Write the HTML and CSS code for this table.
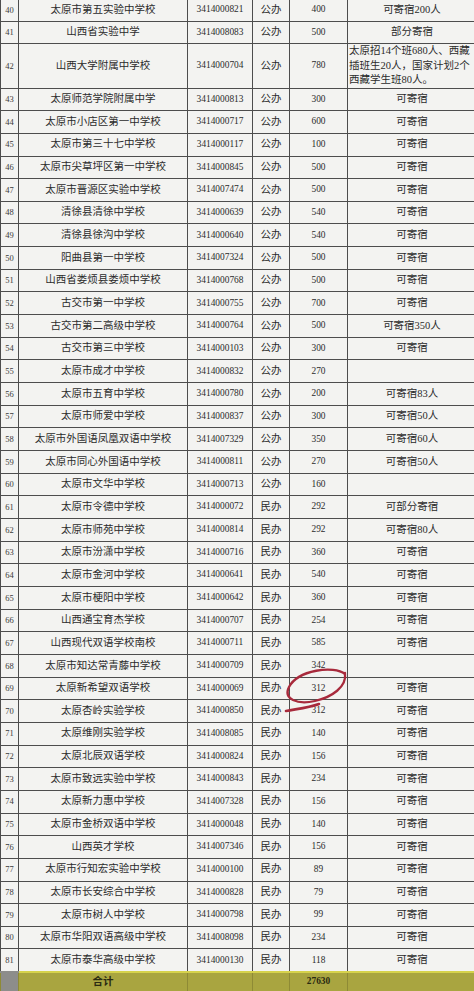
FILE: index.html
```html
<!DOCTYPE html>
<html lang="zh-CN">
<head>
<meta charset="utf-8">
<title>学校名单</title>
<link rel="stylesheet" href="styles.css">
</head>
<body>
<div class="page">
<table class="sheet">
<colgroup>
<col class="c-no"><col class="c-name"><col class="c-code"><col class="c-type"><col class="c-plan"><col class="c-note">
</colgroup>
<tbody>
<tr><td class="no">40</td><td>太原市第五实验中学校</td><td class="num">3414000821</td><td>公办</td><td class="num">400</td><td>可寄宿200人</td></tr>
<tr><td class="no">41</td><td>山西省实验中学</td><td class="num">3414008083</td><td>公办</td><td class="num">500</td><td>部分寄宿</td></tr>
<tr class="tall"><td class="no">42</td><td>山西大学附属中学校</td><td class="num">3414000704</td><td>公办</td><td class="num">780</td><td class="long">太原招14个班680人、西藏<br>插班生20人，国家计划2个<br>西藏学生班80人。</td></tr>
<tr><td class="no">43</td><td>太原师范学院附属中学</td><td class="num">3414000813</td><td>公办</td><td class="num">300</td><td>可寄宿</td></tr>
<tr><td class="no">44</td><td>太原市小店区第一中学校</td><td class="num">3414000717</td><td>公办</td><td class="num">600</td><td>可寄宿</td></tr>
<tr><td class="no">45</td><td>太原市第三十七中学校</td><td class="num">3414000117</td><td>公办</td><td class="num">100</td><td>可寄宿</td></tr>
<tr><td class="no">46</td><td>太原市尖草坪区第一中学校</td><td class="num">3414000845</td><td>公办</td><td class="num">500</td><td>可寄宿</td></tr>
<tr><td class="no">47</td><td>太原市晋源区实验中学校</td><td class="num">3414007474</td><td>公办</td><td class="num">500</td><td>可寄宿</td></tr>
<tr><td class="no">48</td><td>清徐县清徐中学校</td><td class="num">3414000639</td><td>公办</td><td class="num">540</td><td>可寄宿</td></tr>
<tr><td class="no">49</td><td>清徐县徐沟中学校</td><td class="num">3414000640</td><td>公办</td><td class="num">540</td><td>可寄宿</td></tr>
<tr><td class="no">50</td><td>阳曲县第一中学校</td><td class="num">3414007324</td><td>公办</td><td class="num">500</td><td>可寄宿</td></tr>
<tr><td class="no">51</td><td>山西省娄烦县娄烦中学校</td><td class="num">3414000768</td><td>公办</td><td class="num">500</td><td>可寄宿</td></tr>
<tr><td class="no">52</td><td>古交市第一中学校</td><td class="num">3414000755</td><td>公办</td><td class="num">700</td><td>可寄宿</td></tr>
<tr><td class="no">53</td><td>古交市第二高级中学校</td><td class="num">3414000764</td><td>公办</td><td class="num">500</td><td>可寄宿350人</td></tr>
<tr><td class="no">54</td><td>古交市第三中学校</td><td class="num">3414000103</td><td>公办</td><td class="num">300</td><td>可寄宿</td></tr>
<tr><td class="no">55</td><td>太原市成才中学校</td><td class="num">3414000832</td><td>公办</td><td class="num">270</td><td></td></tr>
<tr><td class="no">56</td><td>太原市五育中学校</td><td class="num">3414000780</td><td>公办</td><td class="num">200</td><td>可寄宿83人</td></tr>
<tr><td class="no">57</td><td>太原市师爱中学校</td><td class="num">3414000837</td><td>公办</td><td class="num">300</td><td>可寄宿50人</td></tr>
<tr><td class="no">58</td><td>太原市外国语凤凰双语中学校</td><td class="num">3414007329</td><td>公办</td><td class="num">350</td><td>可寄宿60人</td></tr>
<tr><td class="no">59</td><td>太原市同心外国语中学校</td><td class="num">3414000811</td><td>公办</td><td class="num">270</td><td>可寄宿50人</td></tr>
<tr><td class="no">60</td><td>太原市文华中学校</td><td class="num">3414000713</td><td>公办</td><td class="num">160</td><td></td></tr>
<tr><td class="no">61</td><td>太原市令德中学校</td><td class="num">3414000072</td><td>民办</td><td class="num">292</td><td>可部分寄宿</td></tr>
<tr><td class="no">62</td><td>太原市师苑中学校</td><td class="num">3414000814</td><td>民办</td><td class="num">292</td><td>可寄宿80人</td></tr>
<tr><td class="no">63</td><td>太原市汾潇中学校</td><td class="num">3414000716</td><td>民办</td><td class="num">360</td><td>可寄宿</td></tr>
<tr><td class="no">64</td><td>太原市金河中学校</td><td class="num">3414000641</td><td>民办</td><td class="num">540</td><td>可寄宿</td></tr>
<tr><td class="no">65</td><td>太原市梗阳中学校</td><td class="num">3414000642</td><td>民办</td><td class="num">360</td><td>可寄宿</td></tr>
<tr><td class="no">66</td><td>山西通宝育杰学校</td><td class="num">3414000707</td><td>民办</td><td class="num">254</td><td>可寄宿</td></tr>
<tr><td class="no">67</td><td>山西现代双语学校南校</td><td class="num">3414000711</td><td>民办</td><td class="num">585</td><td>可寄宿</td></tr>
<tr><td class="no">68</td><td>太原市知达常青藤中学校</td><td class="num">3414000709</td><td>民办</td><td class="num">342</td><td></td></tr>
<tr><td class="no">69</td><td>太原新希望双语学校</td><td class="num">3414000069</td><td>民办</td><td class="num">312</td><td>可寄宿</td></tr>
<tr><td class="no">70</td><td>太原杏岭实验学校</td><td class="num">3414000850</td><td>民办</td><td class="num">312</td><td>可寄宿</td></tr>
<tr><td class="no">71</td><td>太原维刚实验学校</td><td class="num">3414008085</td><td>民办</td><td class="num">140</td><td>可寄宿</td></tr>
<tr><td class="no">72</td><td>太原北辰双语学校</td><td class="num">3414000824</td><td>民办</td><td class="num">156</td><td>可寄宿</td></tr>
<tr><td class="no">73</td><td>太原市致远实验中学校</td><td class="num">3414000843</td><td>民办</td><td class="num">234</td><td>可寄宿</td></tr>
<tr><td class="no">74</td><td>太原新力惠中学校</td><td class="num">3414007328</td><td>民办</td><td class="num">156</td><td>可寄宿</td></tr>
<tr><td class="no">75</td><td>太原市金桥双语中学校</td><td class="num">3414000048</td><td>民办</td><td class="num">140</td><td>可寄宿</td></tr>
<tr><td class="no">76</td><td>山西英才学校</td><td class="num">3414007346</td><td>民办</td><td class="num">156</td><td>可寄宿</td></tr>
<tr><td class="no">77</td><td>太原市行知宏实验中学校</td><td class="num">3414000100</td><td>民办</td><td class="num">89</td><td>可寄宿</td></tr>
<tr><td class="no">78</td><td>太原市长安综合中学校</td><td class="num">3414000828</td><td>民办</td><td class="num">79</td><td>可寄宿</td></tr>
<tr><td class="no">79</td><td>太原市树人中学校</td><td class="num">3414000798</td><td>民办</td><td class="num">99</td><td>可寄宿</td></tr>
<tr><td class="no">80</td><td>太原市华阳双语高级中学校</td><td class="num">3414008098</td><td>民办</td><td class="num">234</td><td>可寄宿</td></tr>
<tr><td class="no">81</td><td>太原市泰华高级中学校</td><td class="num">3414000130</td><td>民办</td><td class="num">118</td><td>可寄宿</td></tr>
<tr class="total"><td class="no"></td><td>合计</td><td></td><td></td><td class="num">27630</td><td></td></tr>
</tbody>
</table>
<svg class="mark" width="474" height="991" viewBox="0 0 474 991" aria-hidden="true">
<path d="M 345 674 C 334 665, 298 670, 289 687 C 283 699, 297 705, 315 701 C 332 697, 347 687, 345 673" fill="none" stroke="#a82a3c" stroke-width="2.3" stroke-linecap="round"/>
<path d="M 286 711 C 296 709, 308 708, 319 704" fill="none" stroke="#a82a3c" stroke-width="2.6" stroke-linecap="round"/>
</svg>
</div>
</body>
</html>
```
FILE: styles.css
```css
html, body {
  margin: 0;
  padding: 0;
  background: #f3f3f1;
}

.page {
  position: relative;
  width: 474px;
  height: 991px;
  overflow: hidden;
}

.sheet {
  width: 476px;
  margin-top: -2px;
  border-collapse: collapse;
  table-layout: fixed;
  font-family: "Liberation Serif", "Noto Sans CJK SC", serif;
  font-size: 10.5px;
  color: #2b2b2b;
}

.c-no { width: 18px; }
.c-name { width: 169px; }
.c-code { width: 65px; }
.c-type { width: 37px; }
.c-plan { width: 58px; }
.c-note { width: 129px; }

.sheet td {
  height: 21.66px;
  padding: 0;
  border: 1px solid #4d4d4d;
  text-align: center;
  vertical-align: middle;
  white-space: nowrap;
  line-height: 1;
}

.sheet td.num {
  font-size: 9.4px;
}

.sheet td.no {
  font-size: 8.5px;
  color: #3a3a3a;
}

.sheet tr.tall td {
  height: 40.6px;
}

.sheet td.long {
  text-align: left;
  line-height: 14.4px;
  padding-left: 1px;
}

.sheet tr.total td {
  height: 26px;
  background: #a9a540;
  border-top: 2px solid #d6d24c;
  border-left: 1px solid #8e8a35;
  border-right: 1px solid #8e8a35;
  border-bottom: none;
  font-weight: 700;
  color: #2a2a12;
  vertical-align: top;
  padding-top: 4px;
}

.sheet tr.total td.no {
  background: #8d8d8b;
  border-top-color: #8d8d8b;
}

.mark {
  position: absolute;
  left: 0;
  top: 0;
  pointer-events: none;
}
```
